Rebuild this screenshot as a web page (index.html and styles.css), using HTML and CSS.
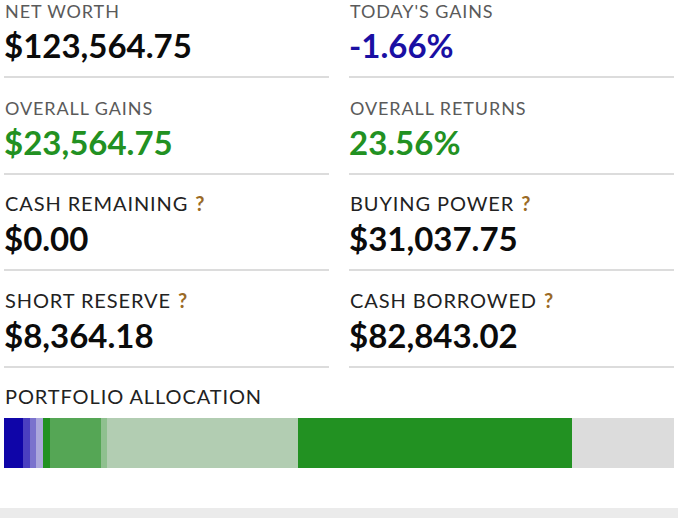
FILE: index.html
```html
<!DOCTYPE html>
<html>
<head>
<meta charset="utf-8">
<link rel="stylesheet" href="styles.css">
</head>
<body>
<div class="page">
  <div class="stats">
    <div class="stat">
      <div class="label muted">NET WORTH</div>
      <div class="value">$123,564.75</div>
    </div>
    <div class="stat">
      <div class="label muted">TODAY'S GAINS</div>
      <div class="value neg">-1.66%</div>
    </div>
    <div class="stat">
      <div class="label muted">OVERALL GAINS</div>
      <div class="value pos">$23,564.75</div>
    </div>
    <div class="stat">
      <div class="label muted">OVERALL RETURNS</div>
      <div class="value pos">23.56%</div>
    </div>
    <div class="stat">
      <div class="label">CASH REMAINING <span class="help">?</span></div>
      <div class="value">$0.00</div>
    </div>
    <div class="stat">
      <div class="label">BUYING POWER <span class="help">?</span></div>
      <div class="value">$31,037.75</div>
    </div>
    <div class="stat">
      <div class="label">SHORT RESERVE <span class="help">?</span></div>
      <div class="value">$8,364.18</div>
    </div>
    <div class="stat">
      <div class="label">CASH BORROWED <span class="help">?</span></div>
      <div class="value">$82,843.02</div>
    </div>
  </div>
  <div class="alloc">
    <div class="label">PORTFOLIO ALLOCATION</div>
    <div class="bar">
      <div class="seg" style="width:19px;background:#0f05a8"></div>
      <div class="seg" style="width:7px;background:#4a3fc0"></div>
      <div class="seg" style="width:6px;background:#7a72cd"></div>
      <div class="seg" style="width:7px;background:#aba7dc"></div>
      <div class="seg" style="width:7px;background:#229122"></div>
      <div class="seg" style="width:51px;background:#55a655"></div>
      <div class="seg" style="width:6px;background:#8fc08f"></div>
      <div class="seg" style="width:191px;background:#b2cdb2"></div>
      <div class="seg" style="width:274px;background:#229122"></div>
    </div>
  </div>
</div>
<div class="footer"></div>
</body>
</html>
```
FILE: styles.css
```css
html, body {
  margin: 0;
  padding: 0;
  background: #fff;
}
body {
  font-family: Lato, "Open Sans", sans-serif;
  color: #111;
  width: 678px;
  height: 518px;
  overflow: hidden;
}
.page {
  padding: 0 4px;
}
.stats {
  display: grid;
  grid-template-columns: 325px 325px;
  column-gap: 20px;
  row-gap: 18.7px;
}
.stat {
  border-bottom: 2px solid #dcdcdc;
  padding-bottom: 12px;
}
.label {
  font-size: 20px;
  line-height: 20px;
  height: 22px;
  letter-spacing: 0.9px;
  color: #222;
  padding-left: 1px;
}
.label.muted {
  font-size: 18px;
  line-height: 22px;
  color: #5a5a5a;
}
.help {
  color: #9a6a25;
  font-weight: 700;
  margin-left: 1px;
}
.value {
  margin-top: 4px;
  font-size: 33px;
  line-height: 38px;
  font-weight: 700;
  color: #0b0b0b;
}
.value.neg {
  color: #1a0fa3;
}
.value.pos {
  color: #229122;
}
.alloc {
  margin-top: 18px;
}
.bar {
  margin-top: 10px;
  height: 50px;
  background: #dcdcdc;
  display: flex;
}
.seg {
  height: 100%;
}
.footer {
  margin-top: 40px;
  height: 12px;
  background: #ebebeb;
}
```
